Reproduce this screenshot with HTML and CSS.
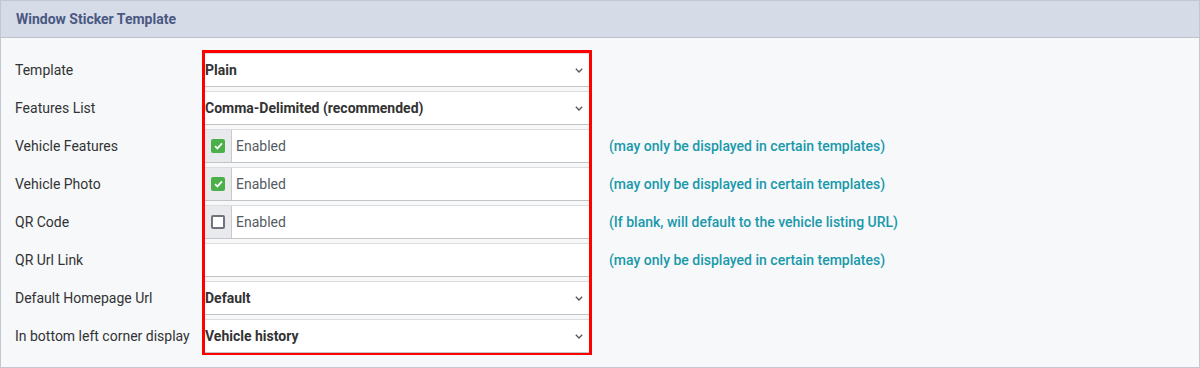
FILE: index.html
```html
<!DOCTYPE html>
<html>
<head>
  <meta charset="UTF-8">
  <title>Window Sticker Template</title>
  <link rel="stylesheet" href="styles.css">
</head>
<body>
  <div class="panel">
    <div class="panel-header">Window Sticker Template</div>
    <div class="panel-body">
      <div class="label-col">
        <div class="form-label">Template</div>
        <div class="form-label">Features List</div>
        <div class="form-label">Vehicle Features</div>
        <div class="form-label">Vehicle Photo</div>
        <div class="form-label">QR Code</div>
        <div class="form-label">QR Url Link</div>
        <div class="form-label">Default Homepage Url</div>
        <div class="form-label">In bottom left corner display</div>
      </div>

      <div class="field-col highlight">
        <div class="field select-field">
          <span class="select-value">Plain</span>
          <svg class="chevron" width="8" height="5" viewBox="0 0 8 5"><polyline points="0.8,0.8 4,4 7.2,0.8" fill="none" stroke="#555" stroke-width="1.3"/></svg>
        </div>
        <div class="field select-field">
          <span class="select-value">Comma-Delimited (recommended)</span>
          <svg class="chevron" width="8" height="5" viewBox="0 0 8 5"><polyline points="0.8,0.8 4,4 7.2,0.8" fill="none" stroke="#555" stroke-width="1.3"/></svg>
        </div>
        <div class="field check-field">
          <span class="addon">
            <span class="checkbox checked">
              <svg width="9" height="8" viewBox="0 0 9 8"><polyline points="1,4.2 3.4,6.4 8,1.4" fill="none" stroke="#fff" stroke-width="1.8"/></svg>
            </span>
          </span>
          <span class="check-text">Enabled</span>
        </div>
        <div class="field check-field">
          <span class="addon">
            <span class="checkbox checked">
              <svg width="9" height="8" viewBox="0 0 9 8"><polyline points="1,4.2 3.4,6.4 8,1.4" fill="none" stroke="#fff" stroke-width="1.8"/></svg>
            </span>
          </span>
          <span class="check-text">Enabled</span>
        </div>
        <div class="field check-field">
          <span class="addon">
            <span class="checkbox"></span>
          </span>
          <span class="check-text">Enabled</span>
        </div>
        <div class="field text-field"></div>
        <div class="field select-field">
          <span class="select-value">Default</span>
          <svg class="chevron" width="8" height="5" viewBox="0 0 8 5"><polyline points="0.8,0.8 4,4 7.2,0.8" fill="none" stroke="#555" stroke-width="1.3"/></svg>
        </div>
        <div class="field select-field">
          <span class="select-value">Vehicle history</span>
          <svg class="chevron" width="8" height="5" viewBox="0 0 8 5"><polyline points="0.8,0.8 4,4 7.2,0.8" fill="none" stroke="#555" stroke-width="1.3"/></svg>
        </div>
      </div>

      <div class="help-col">
        <div class="help-text"></div>
        <div class="help-text"></div>
        <div class="help-text">(may only be displayed in certain templates)</div>
        <div class="help-text">(may only be displayed in certain templates)</div>
        <div class="help-text">(If blank, will default to the vehicle listing URL)</div>
        <div class="help-text">(may only be displayed in certain templates)</div>
        <div class="help-text"></div>
        <div class="help-text"></div>
      </div>
    </div>
  </div>
</body>
</html>
```

FILE: styles.css
```css
html, body {
  margin: 0;
  padding: 0;
}
body {
  font-family: Roboto, "Liberation Sans", Arial, sans-serif;
  background-color: #ffffff;
}
.panel {
  width: 1200px;
  height: 368px;
  box-sizing: border-box;
  border: 1px solid #c3c8d0;
  background-color: #f6f8fa;
}
.panel-header {
  height: 37px;
  box-sizing: border-box;
  padding-left: 15px;
  line-height: 36px;
  background-color: #d5dce8;
  border-bottom: 1px solid #bcc3ce;
  font-size: 14px;
  font-weight: 700;
  color: #4a5882;
}
.panel-body {
  display: flex;
  padding: 12px 0 0 14px;
}
.label-col,
.help-col {
  display: flex;
  flex-direction: column;
  gap: 4px;
  padding-top: 3px;
}
.label-col {
  width: 187px;
}
.form-label {
  height: 34px;
  display: flex;
  align-items: center;
  font-size: 14px;
  color: #333;
}
.highlight {
  border: 3px solid #ff0000;
  border-bottom-width: 2px;
}
.field-col {
  width: 384px;
  display: flex;
  flex-direction: column;
  gap: 4px;
}
.field {
  height: 34px;
  box-sizing: border-box;
  display: flex;
  align-items: center;
  background-color: #fff;
  border-top: 1px solid #dcdcdc;
  border-bottom: 1px solid #c4c4c4;
}
.select-field {
  justify-content: space-between;
  padding-right: 6px;
}
.select-value {
  font-size: 14px;
  font-weight: 700;
  color: #333;
}
.chevron {
  display: block;
}
.check-field {
  align-items: stretch;
}
.addon {
  width: 26px;
  display: flex;
  align-items: center;
  justify-content: center;
  background-color: #e8eaee;
  border-right: 1px solid #c9c9c9;
}
.checkbox {
  width: 14px;
  height: 14px;
  box-sizing: border-box;
  border: 2px solid #70737c;
  border-radius: 2px;
  background-color: #fff;
  display: flex;
  align-items: center;
  justify-content: center;
}
.checkbox.checked {
  border: none;
  background-color: #4cb04a;
}
.check-text {
  display: flex;
  align-items: center;
  padding-left: 4px;
  font-size: 14px;
  color: #555b63;
}
.help-col {
  padding-left: 17px;
}
.help-text {
  height: 34px;
  display: flex;
  align-items: center;
  font-size: 14px;
  font-weight: 500;
  color: #1a98ab;
}
```
